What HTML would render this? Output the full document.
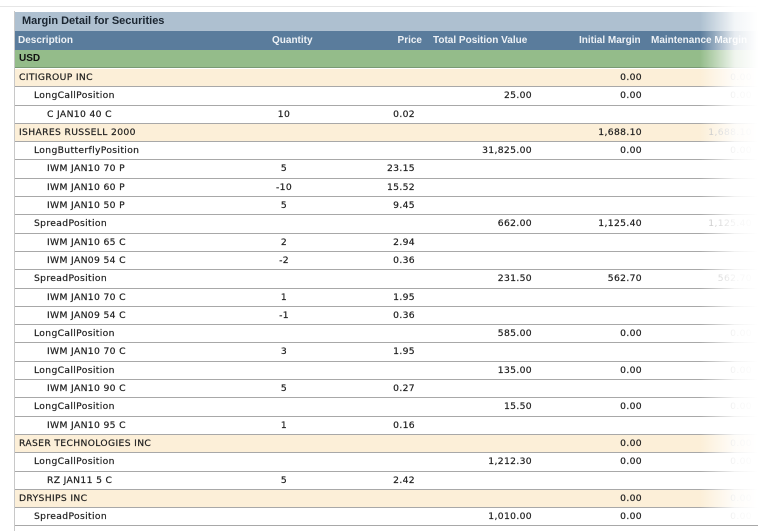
<!DOCTYPE html>
<html><head><style>
body{margin:0;width:758px;height:525px;overflow:hidden;background:#fff;font-family:"DejaVu Sans","Liberation Sans",sans-serif;position:relative}
.frame{position:absolute;left:14px;top:11px;width:760px;height:520px;border-left:1px solid #c8c8c8}
.title{position:absolute;left:15px;top:12px;width:760px;height:19px;background:#aec0d0;font:bold 11px "Liberation Sans",sans-serif;color:#1a2530;line-height:19px;padding-left:7px;box-sizing:border-box}
.hdr{position:absolute;left:15px;top:31px;width:760px;height:19px;background:#5a7c9c;color:#eef2f6;font:bold 10px "Liberation Sans",sans-serif;line-height:19px}
.usd{position:absolute;left:15px;top:50px;width:760px;height:18px;background:#94bc8a;font:bold 10px "Liberation Sans",sans-serif;line-height:18px;padding-left:4px;box-sizing:border-box;color:#111;border-bottom:1px solid #7a9a74}
.rows{position:absolute;left:15px;top:69px;width:760px}
.r{height:18.3px;box-sizing:border-box;border-bottom:1.5px solid #a8a8a8;position:relative;font-size:9.2px;letter-spacing:0.35px;color:#1e1e1e;line-height:17px;-webkit-text-stroke:0.2px #1e1e1e}
.g{background:#fcefd8}
.r span,.hdr span{position:absolute;white-space:nowrap}
.d0{left:4px}.d1{left:19px}.d2{left:32px}
.q{left:259px;width:20px;text-align:center}
.p{right:360px}.t{right:243px}.i{right:133px}.m{right:23px;color:#bbb;-webkit-text-stroke:0}
.fade{position:absolute;left:700px;top:0;width:58px;height:525px;background:linear-gradient(to right,rgba(255,255,255,0),rgba(255,255,255,.85) 60%,#fff)}
.top{position:absolute;left:0;top:0;width:758px;height:6px;border-bottom:1px solid #e6e6e6}
</style></head><body>
<div class="top"></div>
<div class="frame"></div>
<div class="title">Margin Detail for Securities</div>
<div class="hdr"><span style="left:3px">Description</span><span style="left:257px">Quantity</span><span style="right:353px">Price</span><span style="left:418px">Total Position Value</span><span style="left:564px">Initial Margin</span><span style="left:636px">Maintenance Margin</span></div>
<div class="usd">USD</div>
<div class="rows">
<div class="r g"><span class="d0">CITIGROUP INC</span><span class="i">0.00</span><span class="m">0.00</span></div>
<div class="r"><span class="d1">LongCallPosition</span><span class="t">25.00</span><span class="i">0.00</span><span class="m">0.00</span></div>
<div class="r"><span class="d2">C JAN10 40 C</span><span class="q">10</span><span class="p">0.02</span></div>
<div class="r g"><span class="d0">ISHARES RUSSELL 2000</span><span class="i">1,688.10</span><span class="m">1,688.10</span></div>
<div class="r"><span class="d1">LongButterflyPosition</span><span class="t">31,825.00</span><span class="i">0.00</span><span class="m">0.00</span></div>
<div class="r"><span class="d2">IWM JAN10 70 P</span><span class="q">5</span><span class="p">23.15</span></div>
<div class="r"><span class="d2">IWM JAN10 60 P</span><span class="q">-10</span><span class="p">15.52</span></div>
<div class="r"><span class="d2">IWM JAN10 50 P</span><span class="q">5</span><span class="p">9.45</span></div>
<div class="r"><span class="d1">SpreadPosition</span><span class="t">662.00</span><span class="i">1,125.40</span><span class="m">1,125.40</span></div>
<div class="r"><span class="d2">IWM JAN10 65 C</span><span class="q">2</span><span class="p">2.94</span></div>
<div class="r"><span class="d2">IWM JAN09 54 C</span><span class="q">-2</span><span class="p">0.36</span></div>
<div class="r"><span class="d1">SpreadPosition</span><span class="t">231.50</span><span class="i">562.70</span><span class="m">562.70</span></div>
<div class="r"><span class="d2">IWM JAN10 70 C</span><span class="q">1</span><span class="p">1.95</span></div>
<div class="r"><span class="d2">IWM JAN09 54 C</span><span class="q">-1</span><span class="p">0.36</span></div>
<div class="r"><span class="d1">LongCallPosition</span><span class="t">585.00</span><span class="i">0.00</span><span class="m">0.00</span></div>
<div class="r"><span class="d2">IWM JAN10 70 C</span><span class="q">3</span><span class="p">1.95</span></div>
<div class="r"><span class="d1">LongCallPosition</span><span class="t">135.00</span><span class="i">0.00</span><span class="m">0.00</span></div>
<div class="r"><span class="d2">IWM JAN10 90 C</span><span class="q">5</span><span class="p">0.27</span></div>
<div class="r"><span class="d1">LongCallPosition</span><span class="t">15.50</span><span class="i">0.00</span><span class="m">0.00</span></div>
<div class="r"><span class="d2">IWM JAN10 95 C</span><span class="q">1</span><span class="p">0.16</span></div>
<div class="r g"><span class="d0">RASER TECHNOLOGIES INC</span><span class="i">0.00</span><span class="m">0.00</span></div>
<div class="r"><span class="d1">LongCallPosition</span><span class="t">1,212.30</span><span class="i">0.00</span><span class="m">0.00</span></div>
<div class="r"><span class="d2">RZ JAN11 5 C</span><span class="q">5</span><span class="p">2.42</span></div>
<div class="r g"><span class="d0">DRYSHIPS INC</span><span class="i">0.00</span><span class="m">0.00</span></div>
<div class="r"><span class="d1">SpreadPosition</span><span class="t">1,010.00</span><span class="i">0.00</span><span class="m">0.00</span></div>
</div>
<div class="fade"></div>
</body></html>
